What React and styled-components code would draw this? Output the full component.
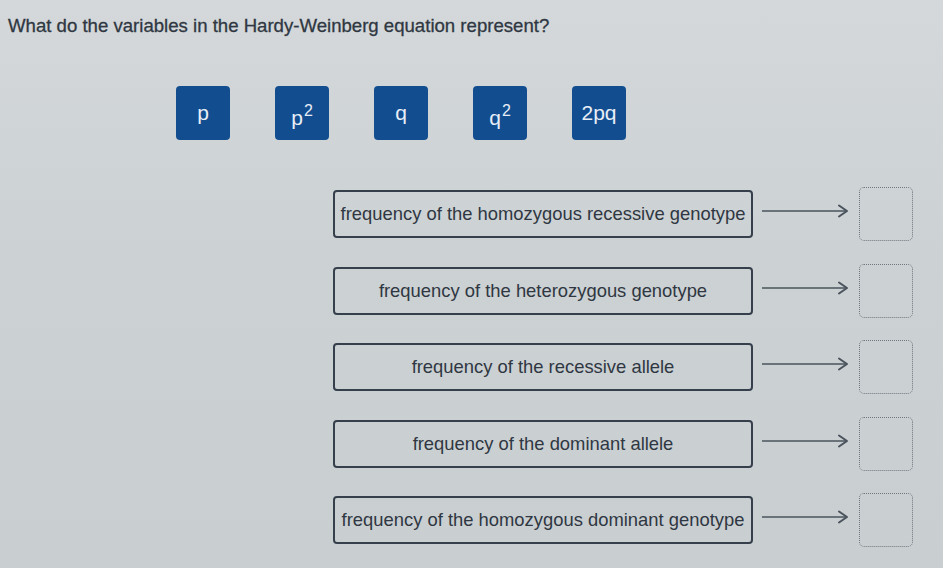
import React from 'react';
import styled, { createGlobalStyle } from 'styled-components';

const GlobalStyle = createGlobalStyle`
  html, body {
    margin: 0;
    padding: 0;
  }
  body {
    background: #cdd2d4;
    font-family: "Liberation Sans", Arial, sans-serif;
    color: #303844;
  }
`;

const Page = styled.div`
  width: 943px;
  height: 568px;
  overflow: hidden;
  background: linear-gradient(180deg, #d4d8da 0%, #ccd1d3 45%, #c9ced1 100%);
`;

const Title = styled.h1`
  margin: 0;
  padding: 15px 0 0 8px;
  font-size: 18.6px;
  line-height: 22px;
  font-weight: 400;
  color: #2f3742;
  -webkit-text-stroke: 0.3px #2f3742;
`;

const Tiles = styled.div`
  display: flex;
  gap: 45px;
  margin: 49px 0 0 176px;
`;

const Tile = styled.div`
  width: 54px;
  height: 54px;
  border-radius: 4px;
  background: #124d90;
  color: #e8eef6;
  display: flex;
  align-items: center;
  justify-content: center;
  font-size: 21px;
`;

const Label = styled.span`
  line-height: 24px;
  padding-top: ${(p) => (p.$raised ? '9px' : '0')};
`;

const Exp = styled.sup`
  font-size: 16px;
  line-height: 0;
  vertical-align: 9px;
  margin-left: 1px;
`;

const Rows = styled.div`
  display: flex;
  flex-direction: column;
  gap: 28.5px;
  margin: 50px 0 0 333px;
`;

const Row = styled.div`
  display: flex;
  align-items: center;
  height: 48px;
`;

const Statement = styled.div`
  box-sizing: border-box;
  width: 420px;
  height: 48px;
  border: 2px solid #36404c;
  border-radius: 4px;
  display: flex;
  align-items: center;
  justify-content: center;
  font-size: 18.4px;
  color: #2f3742;
  white-space: nowrap;
`;

const Arrow = styled.svg`
  width: 96px;
  height: 16px;
  margin-top: -6px;
  flex: none;
`;

const Drop = styled.div`
  box-sizing: border-box;
  width: 54px;
  height: 54px;
  margin-left: 10px;
  border: 1.5px dotted #6e767e;
  border-radius: 5px;
`;

const tiles = [
  { base: 'p' },
  { base: 'p', exp: '2' },
  { base: 'q' },
  { base: 'q', exp: '2' },
  { base: '2pq' },
];

const statements = [
  'frequency of the homozygous recessive genotype',
  'frequency of the heterozygous genotype',
  'frequency of the recessive allele',
  'frequency of the dominant allele',
  'frequency of the homozygous dominant genotype',
];

const App = () => (
  <Page>
    <GlobalStyle />
    <Title>What do the variables in the Hardy-Weinberg equation represent?</Title>
    <Tiles>
      {tiles.map((t, i) => (
        <Tile key={i}>
          <Label $raised={!!t.exp}>
            {t.base}
            {t.exp && <Exp>{t.exp}</Exp>}
          </Label>
        </Tile>
      ))}
    </Tiles>
    <Rows>
      {statements.map((s) => (
        <Row key={s}>
          <Statement>{s}</Statement>
          <Arrow viewBox="0 0 96 16">
            <line x1="9" y1="8" x2="94" y2="8" stroke="#4a535c" strokeWidth="1.4" />
            <polyline points="86,2.5 94,8 86,13.5" fill="none" stroke="#4a535c" strokeWidth="2" strokeLinejoin="round" strokeLinecap="round" />
          </Arrow>
          <Drop />
        </Row>
      ))}
    </Rows>
  </Page>
);

export default App;
